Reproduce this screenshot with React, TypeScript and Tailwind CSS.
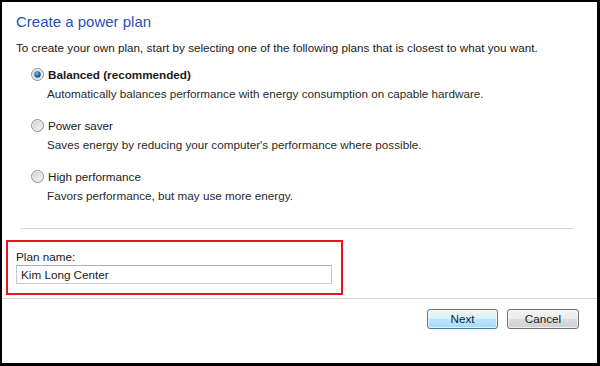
const font = { fontFamily: '"Liberation Sans", Arial, sans-serif' };

function Radio({ checked }: { checked?: boolean }) {
  return (
    <svg width="13" height="13" viewBox="0 0 13 13" className="shrink-0">
      <defs>
        <linearGradient id="rg" x1="0" y1="0" x2="1" y2="1">
          <stop offset="0" stopColor="#cfcfcf" />
          <stop offset="1" stopColor="#f8f8f8" />
        </linearGradient>
        <radialGradient id="dot" cx="0.4" cy="0.35" r="0.7">
          <stop offset="0" stopColor="#7ec6ef" />
          <stop offset="0.5" stopColor="#1b78c2" />
          <stop offset="1" stopColor="#0a3f7a" />
        </radialGradient>
      </defs>
      <circle cx="6.5" cy="6.5" r="6" fill="#f4f4f4" stroke="#8f8f8f" strokeWidth="1" />
      <circle cx="6.5" cy="6.5" r="4.5" fill="url(#rg)" stroke="#d9d9d9" strokeWidth="0.6" />
      {checked && <circle cx="6.5" cy="6.5" r="3.2" fill="url(#dot)" />}
    </svg>
  );
}

const plans = [
  {
    name: "Balanced (recommended)",
    desc: "Automatically balances performance with energy consumption on capable hardware.",
    checked: true,
  },
  {
    name: "Power saver",
    desc: "Saves energy by reducing your computer's performance where possible.",
  },
  {
    name: "High performance",
    desc: "Favors performance, but may use more energy.",
  },
];

export default function App() {
  return (
    <div
      className="w-[600px] h-[366px] bg-white border-t-2 border-l-2 border-r-[3px] border-b-[3px] border-black text-[11.7px] text-[#1a1a1a] flex flex-col"
      style={font}
    >
      <div className="pl-[14px] pt-[10px]">
        <h1 className="text-[15px] leading-[20px] text-[#2a4fb5]">Create a power plan</h1>
        <p className="mt-[6px] leading-[19px]">
          To create your own plan, start by selecting one of the following plans that is closest to what you want.
        </p>
      </div>

      <div className="flex flex-col gap-[13px] mt-[8px] pl-[29px]">
        {plans.map((p) => (
          <div key={p.name} className="flex flex-col">
            <div className="flex items-center gap-[4px] leading-[19px]">
              <Radio checked={p.checked} />
              <span className={p.checked ? "font-bold" : ""}>{p.name}</span>
            </div>
            <div className="pl-[16px] leading-[19px] text-[#2a2a2a]">{p.desc}</div>
          </div>
        ))}
      </div>

      <div className="ml-[18px] w-[554px] h-px bg-[#d6d6d6] mt-[23px]" />

      <div className="ml-[4px] mt-[11px] w-[337px] h-[55px] border-[2px] border-[#e8141e] pl-[8px] pt-[7px]">
        <div className="leading-[15px]">Plan name:</div>
        <div className="mt-[1px] w-[316px] h-[19px] border border-[#c6c9d0] border-t-[#abadb3] bg-white pl-[4px] leading-[17px]">
          Kim Long Center
        </div>
      </div>

      <div className="mt-[3px] h-px bg-[#d6d6d6]" />

      <div className="flex justify-end gap-[9px] pr-[18px] mt-[10px]">
        <button
          className="w-[71px] h-[20px] rounded-[3px] border border-[#3c7fb1] text-[11.7px] text-[#1a1a3a] bg-[linear-gradient(to_bottom,#eaf6fd_0%,#d9f0fc_50%,#bee6fd_51%,#a7d9f5_100%)] shadow-[inset_0_0_0_1px_#ffffffaa]"
          style={font}
        >
          Next
        </button>
        <button
          className="w-[72px] h-[20px] rounded-[3px] border border-[#707070] text-[11.7px] text-[#1a1a1a] bg-[linear-gradient(to_bottom,#f2f2f2_0%,#ebebeb_50%,#dddddd_51%,#cfcfcf_100%)] shadow-[inset_0_0_0_1px_#ffffffaa]"
          style={font}
        >
          Cancel
        </button>
      </div>
    </div>
  );
}
